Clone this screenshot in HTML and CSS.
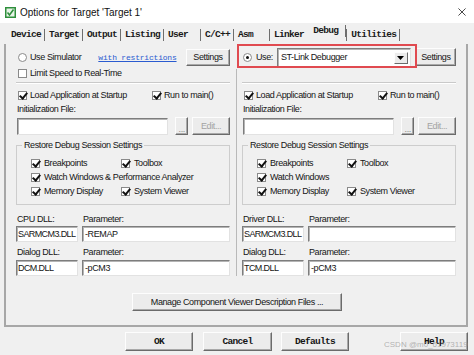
FILE: index.html
```html
<!DOCTYPE html>
<html>
<head>
<meta charset="utf-8">
<title>Options for Target 'Target 1'</title>
<link rel="stylesheet" href="styles.css">
</head>
<body>
<div class="dialog">
  <div class="titlebar">
    <svg class="appicon" viewBox="0 0 11 11">
      <rect x="0" y="0" width="11" height="11" fill="#2f8f3c"/>
      <rect x="1.5" y="1.5" width="8" height="8" fill="#e8f4e8"/>
      <path d="M2.5 5.5 L4.5 8 L8.5 2.5" stroke="#2f8f3c" stroke-width="1.6" fill="none"/>
    </svg>
    <span class="title">Options for Target 'Target 1'</span>
    <svg class="close" viewBox="0 0 9 9"><path d="M0.5 0.5 L8.5 8.5 M8.5 0.5 L0.5 8.5" stroke="#333" stroke-width="1"/></svg>
  </div>

  <div class="tabs">
    <span class="tab">Device</span>
    <span class="tab">Target</span>
    <span class="tab">Output</span>
    <span class="tab">Listing</span>
    <span class="tab tab-user">User</span>
    <span class="tab">C/C++</span>
    <span class="tab tab-asm">Asm</span>
    <span class="tab tab-nosep">Linker</span>
    <span class="tab tab-active">Debug</span>
    <span class="tab">Utilities</span>
  </div>

  <div class="panel">
    <div class="cols">
      <div class="col">
        <div class="row r-top">
          <span class="rb"></span><span class="lbl">Use Simulator</span>
          <span class="link">with restrictions</span>
          <button class="btn btn-settings">Settings</button>
        </div>
        <div class="row r-line"><span class="cb"></span><span class="lbl">Limit Speed to Real-Time</span></div>
        <div class="sep"></div>
        <div class="two r-line">
          <span class="chk"><span class="cb on"></span><span class="lbl">Load Application at Startup</span></span>
          <span class="chk"><span class="cb on"></span><span class="lbl">Run to main()</span></span>
        </div>
        <div class="caption">Initialization File:</div>
        <div class="row r-file">
          <span class="field field-file"></span>
          <button class="btn btn-dots">...</button>
          <button class="btn btn-edit">Edit...</button>
        </div>
        <fieldset class="group">
          <legend>Restore Debug Session Settings</legend>
          <div class="opts">
            <div class="opt"><span class="cb on"></span><span class="lbl">Breakpoints</span></div>
            <div class="opt"><span class="cb on"></span><span class="lbl">Toolbox</span></div>
            <div class="opt opt-wide"><span class="cb on"></span><span class="lbl">Watch Windows &amp; Performance Analyzer</span></div>
            <div class="opt"><span class="cb on"></span><span class="lbl">Memory Display</span></div>
            <div class="opt"><span class="cb on"></span><span class="lbl">System Viewer</span></div>
          </div>
        </fieldset>
        <div class="dll-grid d-first">
          <span class="caption2">CPU DLL:</span><span class="caption2">Parameter:</span>
          <span class="field field-dll">SARMCM3.DLL</span><span class="field">-REMAP</span>
        </div>
        <div class="dll-grid d-second">
          <span class="caption2">Dialog DLL:</span><span class="caption2">Parameter:</span>
          <span class="field field-dll">DCM.DLL</span><span class="field">-pCM3</span>
        </div>
      </div>

      <div class="col col-right">
        <div class="row r-top use-row">
          <span class="rb on"></span><span class="lbl">Use:</span>
          <span class="combo"><span class="combo-text">ST-Link Debugger</span><span class="dd"><svg viewBox="0 0 7 4"><path d="M0 0 L7 0 L3.5 4 Z" fill="#000"/></svg></span></span>
          <button class="btn btn-settings2">Settings</button>
          <span class="highlight"></span>
        </div>
        <div class="row r-line"></div>
        <div class="sep"></div>
        <div class="two r-line">
          <span class="chk"><span class="cb on"></span><span class="lbl">Load Application at Startup</span></span>
          <span class="chk"><span class="cb on"></span><span class="lbl">Run to main()</span></span>
        </div>
        <div class="caption">Initialization File:</div>
        <div class="row r-file">
          <span class="field field-file"></span>
          <button class="btn btn-dots">...</button>
          <button class="btn btn-edit">Edit...</button>
        </div>
        <fieldset class="group">
          <legend>Restore Debug Session Settings</legend>
          <div class="opts">
            <div class="opt"><span class="cb on"></span><span class="lbl">Breakpoints</span></div>
            <div class="opt"><span class="cb on"></span><span class="lbl">Toolbox</span></div>
            <div class="opt opt-wide"><span class="cb on"></span><span class="lbl">Watch Windows</span></div>
            <div class="opt"><span class="cb on"></span><span class="lbl">Memory Display</span></div>
            <div class="opt"><span class="cb on"></span><span class="lbl">System Viewer</span></div>
          </div>
        </fieldset>
        <div class="dll-grid d-first">
          <span class="caption2">Driver DLL:</span><span class="caption2">Parameter:</span>
          <span class="field field-dll">SARMCM3.DLL</span><span class="field"></span>
        </div>
        <div class="dll-grid d-second">
          <span class="caption2">Dialog DLL:</span><span class="caption2">Parameter:</span>
          <span class="field field-dll">TCM.DLL</span><span class="field">-pCM3</span>
        </div>
      </div>
    </div>
    <div class="manage-row">
      <button class="btn btn-manage">Manage Component Viewer Description Files ...</button>
    </div>
  </div>

  <div class="footer">
    <button class="btn fbtn">OK</button>
    <button class="btn fbtn">Cancel</button>
    <button class="btn fbtn">Defaults</button>
    <button class="btn fbtn fbtn-help">Help</button>
  </div>
  <div class="watermark">CSDN @m0_61973119</div>
</div>
</body>
</html>
```

FILE: styles.css
```css
* { box-sizing: border-box; }
html, body { margin: 0; padding: 0; }
body {
  width: 474px;
  height: 355px;
  overflow: hidden;
  background: #f0f0f0;
  font-family: "Liberation Sans", Arial, sans-serif;
  font-size: 9px;
  letter-spacing: -0.4px;
  color: #151515;
}
.dialog { position: relative; width: 474px; height: 355px; }

/* title bar */
.titlebar {
  height: 23px;
  background: #fff;
  display: flex;
  align-items: center;
  padding-left: 5px;
}
.appicon { width: 11px; height: 11px; flex: none; margin-right: 4px; margin-top: 2px; }
.title { font-size: 10px; letter-spacing: 0; color: #111; margin-top: 2px; }
.close { width: 8px; height: 8px; margin-left: auto; margin-right: 8px; margin-top: 1px; }

/* tabs */
.tabs {
  height: 21px;
  display: flex;
  align-items: flex-end;
  padding: 0 0 3px 7px;
  font-family: "Liberation Mono", "DejaVu Sans Mono", monospace;
  font-weight: bold;
  font-size: 9.5px;
  letter-spacing: -0.7px;
  color: #1a1a1a;
}
.tab {
  height: 12px;
  line-height: 12px;
  padding: 0 3px 0 4px;
  border-right: 1px solid #6e6e6e;
}
.tab-user { padding-right: 12px; }
.tab-asm { padding-right: 16px; }
.tab-nosep { border-right: none; padding-right: 5px; }
.tab-active { margin-bottom: 4px; padding-right: 7px; }
.tab-active + .tab { border-left: 1px solid #6e6e6e; }

/* panel */
.panel {
  margin-left: 4px;
  width: 464px;
  height: 283px;
  border: 2px solid #a7a7a7;
  border-top: none;
  padding: 3px 10px 0 10px;
}
.cols { display: grid; grid-template-columns: 214px 214px; column-gap: 12px; }
.col { display: flex; flex-direction: column; position: relative; }
.col-right::before {
  content: "";
  position: absolute;
  left: -6px;
  top: 22px;
  bottom: 0;
  border-left: 1px solid #b9b9b9;
}

.row { display: flex; align-items: center; }
.two { display: grid; grid-template-columns: 134px 1fr; align-items: center; }
.chk { display: flex; align-items: center; }
.r-top { height: 20px; position: relative; }
.r-line { height: 12px; }
.r-file { height: 18px; margin-top: 2px; }
.lbl { white-space: nowrap; }

.sep {
  height: 2px;
  margin: 3px 0 5px 0;
  border-top: 1px solid #c9c9c9;
  border-bottom: 1px solid #fff;
}
.caption { height: 12px; line-height: 12px; margin-top: 2px; padding-left: 1px; }

/* radio / checkbox */
.rb, .cb {
  flex: none;
  width: 9px;
  height: 9px;
  background: #fff;
  border: 1px solid #8a8a8a;
  position: relative;
  margin-left: 2px;
  margin-right: 3px;
}
.rb { border-radius: 50%; }
.rb.on::after {
  content: "";
  position: absolute;
  left: 2px; top: 2px;
  width: 3px; height: 3px;
  border-radius: 50%;
  background: #111;
}
.cb.on::after {
  content: "";
  position: absolute;
  left: 2px; top: -1px;
  width: 3px; height: 6px;
  border: solid #111;
  border-width: 0 2px 2px 0;
  transform: rotate(40deg);
}

.link {
  font-family: "Liberation Mono", "DejaVu Sans Mono", monospace;
  font-size: 8px;
  letter-spacing: -0.2px;
  color: #2a5bd0;
  text-decoration: underline;
  margin-left: 17px;
}

/* controls */
.btn {
  font: inherit;
  letter-spacing: inherit;
  color: #151515;
  background: #ececec;
  border: 1px solid;
  border-color: #fdfdfd #6b6b6b #6b6b6b #fdfdfd;
  box-shadow: inset -1px -1px 0 #a9a9a9;
  padding: 0;
  margin: 0;
  line-height: 1;
}
.btn-settings { width: 44px; height: 17px; margin-left: auto; }
.btn-settings2 { width: 40px; height: 18px; margin-left: 5px; }
.btn-dots { width: 13px; height: 18px; margin-left: 7px; color: #8a8a8a; padding-top: 6px; }
.btn-edit { width: 38px; height: 18px; margin-left: 4px; color: #a3a3a3; }

.field {
  display: block;
  height: 16px;
  line-height: 14px;
  background: #fff;
  border: 1px solid;
  border-color: #7d7d7d #e2e2e2 #e2e2e2 #7d7d7d;
  box-shadow: inset 1px 1px 0 #b4b4b4;
  padding-left: 2px;
  white-space: nowrap;
  overflow: hidden;
}
.field-dll { padding-left: 1px; letter-spacing: -0.6px; }
.field-file { width: 152px; height: 17px; margin-left: 1px; }

.use-row .rb { margin-left: 1px; margin-right: 4px; }
.combo {
  display: flex;
  align-items: center;
  width: 134px;
  height: 19px;
  margin-left: 4px;
  background: #fff;
  border: 1px solid;
  border-color: #7d7d7d #e2e2e2 #e2e2e2 #7d7d7d;
  box-shadow: inset 1px 1px 0 #b4b4b4;
  padding-left: 3px;
}
.combo-text { white-space: nowrap; }
.dd {
  margin-left: auto;
  margin-right: 2px;
  width: 14px;
  height: 12px;
  background: #ececec;
  border: 1px solid;
  border-color: #fdfdfd #6b6b6b #6b6b6b #fdfdfd;
  display: flex;
  align-items: center;
  justify-content: center;
  margin-top: 2px;
}
.dd svg { width: 7px; height: 4px; }
.highlight {
  position: absolute;
  left: -5px;
  top: -3px;
  width: 180px;
  height: 24px;
  border: 2px solid #e04a50;
  pointer-events: none;
}

/* group */
.group {
  margin: 4px 0 0 0;
  padding: 5px 4px 6px 14px;
  border: 1px solid #cdcdcd;
  min-width: 0;
}
.group legend {
  padding: 0 2px;
  margin-left: -9px;
  line-height: 12px;
  height: 12px;
}
.opts { display: grid; grid-template-columns: 90px 1fr; grid-auto-rows: 14px; }
.opt { display: flex; align-items: center; }
.opt .cb { margin-left: 0; margin-right: 4px; }
.opt-wide { grid-column: 1 / span 2; }

/* dll rows */
.dll-grid {
  display: grid;
  grid-template-columns: 62px 1fr;
  column-gap: 4px;
  row-gap: 1px;
  grid-template-rows: 12px 16px;
}
.d-first { margin-top: 8px; }
.d-second { margin-top: 4px; row-gap: 2px; }
.caption2 { line-height: 12px; padding-left: 1px; }

.manage-row { display: flex; justify-content: center; margin-top: 17px; padding-left: 2px; }
.btn-manage { width: 210px; height: 18px; }

/* footer */
.footer {
  display: flex;
  padding-left: 125px;
  margin-top: 5px;
  font-family: "Liberation Mono", "DejaVu Sans Mono", monospace;
  font-weight: bold;
  font-size: 9.5px;
  letter-spacing: -0.7px;
}
.fbtn { width: 68px; height: 19px; margin-right: 10px; }
.fbtn:nth-child(2) { width: 69px; margin-right: 9px; }
.fbtn-help { margin-left: 41px; margin-right: 0; }

.watermark {
  position: absolute;
  left: 384px;
  top: 340px;
  font-size: 8px;
  letter-spacing: 0;
  color: rgba(150, 150, 150, 0.7);
  white-space: nowrap;
}
```
